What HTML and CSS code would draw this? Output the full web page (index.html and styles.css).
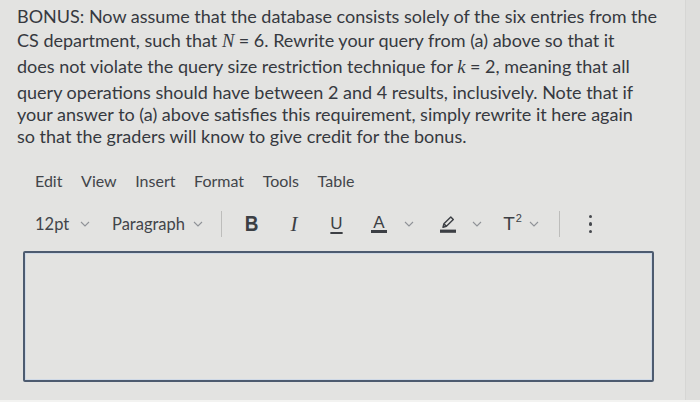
FILE: index.html
```html
<!DOCTYPE html>
<html>
<head>
<meta charset="utf-8">
<link rel="stylesheet" href="styles.css">
</head>
<body>
<div class="screen">
  <div class="page">
    <div class="question">
      <div class="ln">BONUS: Now assume that the database consists solely of the six entries from the</div>
      <div class="ln">CS department, such that <i class="m">N</i> = 6. Rewrite your query from (a) above so that it</div>
      <div class="ln l3">does not violate the query size restriction technique for <i class="m">k</i> = 2, meaning that all</div>
      <div class="ln l4">query operations should have between 2 and 4 results, inclusively. Note that if</div>
      <div class="ln l5">your answer to (a) above satisfies this requirement, simply rewrite it here again</div>
      <div class="ln l6">so that the graders will know to give credit for the bonus.</div>
    </div>
    <div class="menubar">
      <span>Edit</span><span>View</span><span>Insert</span><span>Format</span><span>Tools</span><span>Table</span>
    </div>
    <div class="toolbar">
      <span class="it w12">12pt</span>
      <svg class="it chev c1" viewBox="0 0 10 6"><path d="M1 1l4 4 4-4"/></svg>
      <span class="it para">Paragraph</span>
      <svg class="it chev c2" viewBox="0 0 10 6"><path d="M1 1l4 4 4-4"/></svg>
      <span class="it sep s1"></span>
      <span class="it btn b">B</span>
      <span class="it btn i">I</span>
      <span class="it btn u">U</span>
      <span class="it btn a">A</span>
      <svg class="it chev c3" viewBox="0 0 10 6"><path d="M1 1l4 4 4-4"/></svg>
      <svg class="it hl" viewBox="0 0 18 18"><path d="M4 12.2l0.9-3.4 6.9-6.9 2.5 2.5-6.9 6.9z M4.9 8.8l2.5 2.5"/><rect x="1" y="14.6" width="16" height="3.2"/></svg>
      <svg class="it chev c4" viewBox="0 0 10 6"><path d="M1 1l4 4 4-4"/></svg>
      <span class="it btn t">T<sup>2</sup></span>
      <svg class="it chev c5" viewBox="0 0 10 6"><path d="M1 1l4 4 4-4"/></svg>
      <span class="it sep s2"></span>
      <span class="it dots"><i></i><i></i><i></i></span>
    </div>
    <div class="editor"></div>
  </div>
  <div class="edge"></div>
</div>
</body>
</html>
```
FILE: styles.css
```css
html, body {
  margin: 0;
  padding: 0;
  width: 700px;
  height: 402px;
  overflow: hidden;
  background: #e3e3e1;
}
.screen {
  display: flex;
  width: 700px;
  height: 400px;
  border-bottom: 2px solid #f3f3f1;
}
.page {
  flex: 1;
  padding: 4px 0 0 17px;
  color: #36393f;
  font-family: Lato, "Open Sans", sans-serif;
}
.edge {
  width: 14px;
  background: #dededc;
  border-left: 1px solid #d6d6d4;
}
.question {
  font-size: 18px;
  white-space: nowrap;
}
.ln {
  height: 24px;
  line-height: 24px;
}
.l3 { margin-top: 2px; }
.l4 { margin-top: 2px; }
.l5 { margin-top: -2px; }
.l6 { margin-top: -2px; }
.m {
  font-family: "Liberation Serif", serif;
  font-style: italic;
  font-size: 18.5px;
}
.menubar {
  display: flex;
  gap: 18.6px;
  margin: 23px 0 0 18px;
  height: 20px;
  line-height: 20px;
  font-size: 16px;
  color: #42454a;
}
.toolbar {
  display: flex;
  align-items: center;
  margin: 20px 0 0 18px;
  height: 26px;
  font-size: 16.5px;
  line-height: 20px;
  color: #42454a;
}
.it {
  flex-shrink: 0;
  display: flex;
  justify-content: center;
  align-items: center;
}
.w12 { width: 36px; justify-content: flex-start; }
.para { width: 72px; margin-left: 22px; justify-content: flex-start; }
.chev {
  width: 10px;
  height: 6px;
  fill: none;
  stroke: #8f9297;
  stroke-width: 1.1;
}
.c1 { margin-left: 9px; }
.c2 { margin-left: 9px; }
.c3 { margin-left: 17px; }
.c4 { margin-left: 15px; }
.c5 { margin-left: 7px; }
.sep {
  width: 1px;
  height: 26px;
  background: #bdbdbb;
}
.s1 { margin-left: 18px; }
.s2 { margin-left: 20px; }
.btn {
  color: #3c3f44;
  line-height: 20px;
}
.b {
  width: 15px;
  margin-left: 22px;
  font-family: "Liberation Sans", sans-serif;
  font-weight: bold;
  font-size: 22px;
  transform: scaleX(0.86);
}
.i {
  width: 10px;
  margin-left: 30px;
  font-family: "Liberation Serif", serif;
  font-style: italic;
  font-size: 21px;
}
.u {
  width: 13px;
  margin-left: 31px;
  font-family: "Liberation Sans", sans-serif;
  font-size: 17px;
  text-decoration: underline;
  text-decoration-thickness: 1.5px;
  text-underline-offset: 3px;
}
.a {
  width: 16px;
  margin-left: 28px;
  font-family: "Liberation Sans", sans-serif;
  font-size: 17px;
  line-height: 15px;
  border-bottom: 3px solid #3c3f44;
}
.hl {
  width: 18px;
  height: 18px;
  margin-left: 25px;
  fill: none;
  stroke: #3c3f44;
  stroke-width: 1.4;
  stroke-linejoin: round;
}
.hl rect {
  fill: #3c3f44;
  stroke: none;
}
.t {
  width: 19px;
  margin-left: 21px;
  font-family: "Liberation Sans", sans-serif;
  font-size: 19px;
  align-items: flex-start;
}
.t sup {
  font-size: 11px;
  line-height: 11px;
  margin-left: 1px;
  margin-top: -1px;
}
.dots {
  width: 3px;
  margin-left: 29px;
  flex-direction: column;
  gap: 4px;
}
.dots i {
  width: 3.2px;
  height: 3.2px;
  border-radius: 50%;
  background: #46494e;
}
.editor {
  margin: 14px 0 0 6px;
  width: 627px;
  height: 127px;
  border: 2px solid #4d5b6f;
  border-radius: 2px;
  box-shadow: inset 0 0 0 1px #cfd9e6;
}
```
